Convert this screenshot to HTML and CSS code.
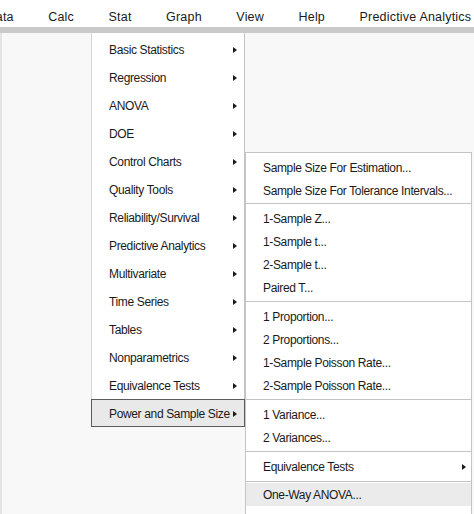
FILE: index.html
```html
<!DOCTYPE html>
<html lang="en">
<head>
<meta charset="utf-8">
<title>Stat menu</title>
<link rel="stylesheet" href="styles.css">
</head>
<body>
  <nav class="menubar">
    <span class="menubar-item menubar-item--clipped">Data</span>
    <span class="menubar-item">Calc</span>
    <span class="menubar-item">Stat</span>
    <span class="menubar-item">Graph</span>
    <span class="menubar-item">View</span>
    <span class="menubar-item">Help</span>
    <span class="menubar-item">Predictive Analytics</span>
  </nav>
  <div class="toolbar-strip"></div>

  <div class="workspace">
    <div class="sidebar"></div>

    <ul class="menu menu--stat">
      <li class="menu-row"><span>Basic Statistics</span><i class="caret"></i></li>
      <li class="menu-row"><span>Regression</span><i class="caret"></i></li>
      <li class="menu-row"><span>ANOVA</span><i class="caret"></i></li>
      <li class="menu-row"><span>DOE</span><i class="caret"></i></li>
      <li class="menu-row"><span>Control Charts</span><i class="caret"></i></li>
      <li class="menu-row"><span>Quality Tools</span><i class="caret"></i></li>
      <li class="menu-row"><span>Reliability/Survival</span><i class="caret"></i></li>
      <li class="menu-row"><span>Predictive Analytics</span><i class="caret"></i></li>
      <li class="menu-row"><span>Multivariate</span><i class="caret"></i></li>
      <li class="menu-row"><span>Time Series</span><i class="caret"></i></li>
      <li class="menu-row"><span>Tables</span><i class="caret"></i></li>
      <li class="menu-row"><span>Nonparametrics</span><i class="caret"></i></li>
      <li class="menu-row"><span>Equivalence Tests</span><i class="caret"></i></li>
      <li class="menu-row menu-row--open"><span>Power and Sample Size</span><i class="caret"></i></li>
    </ul>

    <div class="menu menu--sub">
      <ul class="menu-group menu-group--first">
        <li class="sub-row">Sample Size For Estimation...</li>
        <li class="sub-row">Sample Size For Tolerance Intervals...</li>
      </ul>
      <ul class="menu-group">
        <li class="sub-row">1-Sample Z...</li>
        <li class="sub-row">1-Sample t...</li>
        <li class="sub-row">2-Sample t...</li>
        <li class="sub-row">Paired T...</li>
      </ul>
      <ul class="menu-group">
        <li class="sub-row">1 Proportion...</li>
        <li class="sub-row">2 Proportions...</li>
        <li class="sub-row">1-Sample Poisson Rate...</li>
        <li class="sub-row">2-Sample Poisson Rate...</li>
      </ul>
      <ul class="menu-group">
        <li class="sub-row">1 Variance...</li>
        <li class="sub-row">2 Variances...</li>
      </ul>
      <ul class="menu-group menu-group--submenu">
        <li class="sub-row sub-row--parent"><span>Equivalence Tests</span><i class="caret"></i></li>
      </ul>
      <ul class="menu-group menu-group--last">
        <li class="sub-row sub-row--hover">One-Way ANOVA...</li>
      </ul>
    </div>
  </div>
</body>
</html>
```

FILE: styles.css
```css
html,
body {
  margin: 0;
  padding: 0;
}

body {
  width: 474px;
  height: 514px;
  overflow: hidden;
  background: #f8f8f8;
  font-family: "Liberation Sans", Arial, Helvetica, sans-serif;
  color: #1a1a1a;
}

/* Application menu bar */
.menubar {
  display: flex;
  gap: 34.5px;
  height: 27px;
  box-sizing: border-box;
  padding-top: 8px;
  background: #ffffff;
  font-size: 12.5px;
  line-height: 19px;
  letter-spacing: 0.2px;
  white-space: nowrap;
  overflow: hidden;
}

.menubar-item {
  flex: none;
}

.menubar-item--clipped {
  margin-left: -13.5px;
}

.toolbar-strip {
  height: 6px;
  background: #c9c9c9;
}

/* Area under the menu bar */
.workspace {
  display: flex;
  align-items: flex-start;
  height: 481px;
}

.sidebar {
  flex: none;
  width: 89px;
  height: 100%;
  border-left: 2px solid #e4e4e4;
}

/* Drop-down menus */
.menu {
  margin: 0;
  padding: 0;
  list-style: none;
  background: #ffffff;
  box-sizing: border-box;
  font-size: 12px;
  letter-spacing: -0.35px;
  white-space: nowrap;
}

.menu ul {
  list-style: none;
  margin: 0;
}

.menu--stat {
  flex: none;
  width: 154px;
  padding-top: 2px;
  border-left: 1px solid #d6d6d6;
  border-right: 1px solid #c4c4c4;
}

.menu-row {
  height: 28px;
  box-sizing: border-box;
  display: flex;
  align-items: center;
  justify-content: space-between;
  padding: 1px 7px 0 17px;
}

.menu-row--open {
  margin: 0 -1px;
  border: 1px solid #5c5c5c;
  background: #e9e9e9;
}

.caret {
  display: block;
  width: 0;
  height: 0;
  border-left: 4px solid #1a1a1a;
  border-top: 3.5px solid transparent;
  border-bottom: 3.5px solid transparent;
}

.menu--sub {
  flex: none;
  width: 227px;
  min-height: 370px;
  margin-top: 119px;
  border: 1px solid #c4c4c4;
  border-bottom: none;
}

.menu-group {
  padding: 3px 0 2px;
  border-top: 1px solid #c4c4c4;
}

.menu-group--first {
  border-top: none;
  padding: 3px 0 1px;
}

.menu-group--submenu {
  padding: 3px 0;
}

.menu-group--last {
  padding: 1px 0 0;
}

.sub-row {
  height: 23px;
  box-sizing: border-box;
  display: flex;
  align-items: center;
  padding: 0 8px 0 17px;
}

.sub-row--parent {
  justify-content: space-between;
  padding-right: 5px;
}

.sub-row--hover {
  background: #ebebeb;
}
```
